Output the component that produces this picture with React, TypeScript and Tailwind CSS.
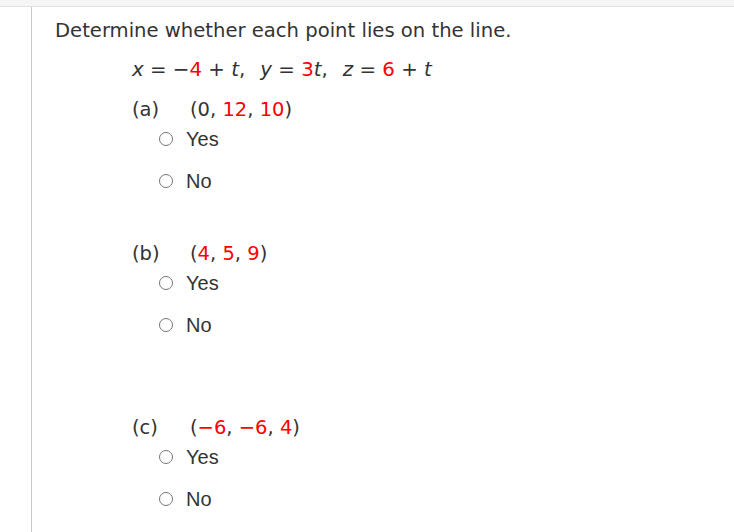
const verdana = { fontFamily: '"DejaVu Sans", Verdana, sans-serif' };

function Red({ children }: { children: React.ReactNode }) {
  return <span className="text-[#ff0000]">{children}</span>;
}

function I({ children }: { children: React.ReactNode }) {
  return <span className="italic">{children}</span>;
}

function Radio({ label }: { label: string }) {
  return (
    <label className="flex items-center gap-[13px] font-['Liberation_Sans',Arial,sans-serif] text-[20px] leading-[24px] text-[#333]">
      <span className="w-[14px] h-[14px] rounded-full border border-[#767676] bg-white" />
      {label}
    </label>
  );
}

function Part({ tag, point, gapBefore }: { tag: string; point: React.ReactNode; gapBefore: string }) {
  return (
    <div className={gapBefore}>
      <div className="flex items-baseline text-[19.5px] leading-[24px]">
        <span className="w-[58px]">({tag})</span>
        <span>{point}</span>
      </div>
      <div className="ml-[27px] mt-[5px] flex flex-col gap-[18px]">
        <Radio label="Yes" />
        <Radio label="No" />
      </div>
    </div>
  );
}

export default function App() {
  return (
    <div className="w-[734px] h-[532px] bg-[#f5f5f5] pt-[6px] overflow-hidden">
      <div className="h-full bg-white border-t border-[#e0e0e0] flex">
        <div className="w-[32px] border-r border-[#c8c8c8]" />
        <div className="pl-[23px] pt-[12px] text-[#333]" style={verdana}>
          <p className="text-[19.6px] leading-[24px]">Determine whether each point lies on the line.</p>
          <div className="pl-[77px]">
            <p className="mt-[15px] text-[19.8px] leading-[24px] whitespace-pre">
              <I>x</I> = −<Red>4</Red> + <I>t</I>,<span className="ml-[15px]" /><I>y</I> = <Red>3</Red><I>t</I>,<span className="ml-[15px]" /><I>z</I> = <Red>6</Red> + <I>t</I>
            </p>
            <Part tag="a" gapBefore="mt-[16px]" point={<>(0, <Red>12</Red>, <Red>10</Red>)</>} />
            <Part tag="b" gapBefore="mt-[49px]" point={<>(<Red>4</Red>, <Red>5</Red>, <Red>9</Red>)</>} />
            <Part tag="c" gapBefore="mt-[79px]" point={<>(<Red>−6</Red>, <Red>−6</Red>, <Red>4</Red>)</>} />
          </div>
        </div>
      </div>
    </div>
  );
}
